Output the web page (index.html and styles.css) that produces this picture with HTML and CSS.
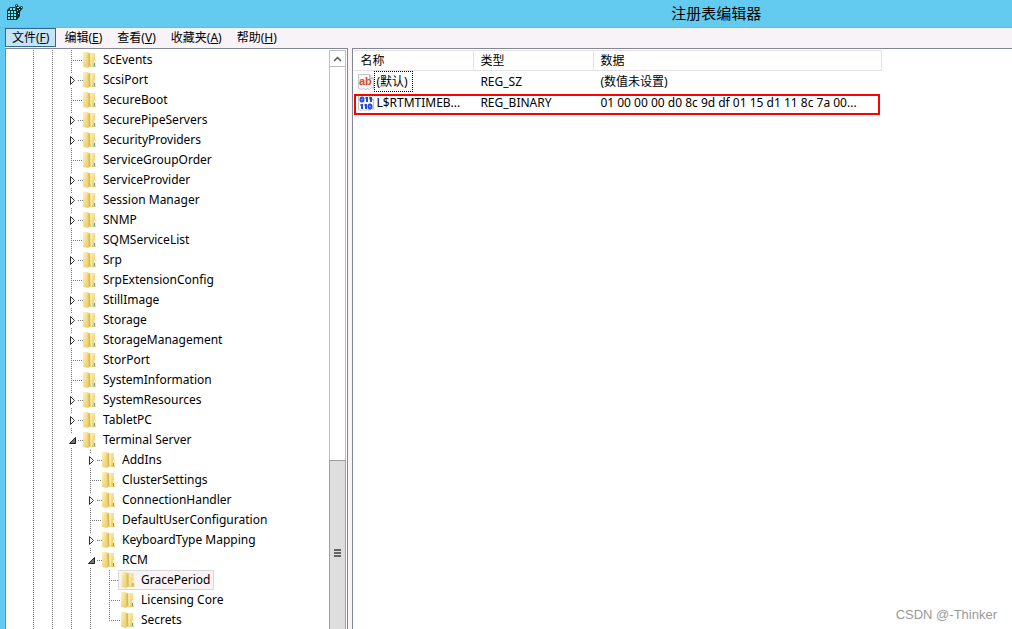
FILE: index.html
```html
<!DOCTYPE html>
<html lang="zh-CN">
<head>
    <meta charset="utf-8">
    <title>注册表编辑器</title>
    <link rel="stylesheet" href="styles.css">
</head>
<body>
    <!-- icons used by the tree and the value list -->
    <svg class="sprite" aria-hidden="true">
        <defs>
            <linearGradient id="gold" x1="0" x2="1" y1="0" y2="1">
                <stop offset="0" stop-color="#fdf3bd"/>
                <stop offset="1" stop-color="#e8c85c"/>
            </linearGradient>
            <linearGradient id="flap" x1="0" x2="1" y1="0" y2="0">
                <stop offset="0" stop-color="#f2dc86"/>
                <stop offset="1" stop-color="#d2b04c"/>
            </linearGradient>
        </defs>
        <symbol id="folder" viewBox="0 0 14 16">
            <path d="M5 1h7v6l1 1v7H5z" fill="url(#gold)"/>
            <path d="M0 0h5l1 1v14l-1 1-5-1z" fill="url(#gold)"/>
            <path d="M4 2l3-1v13l-3 2z" fill="url(#flap)"/>
            <path d="M8.500 2v12" stroke="#f9eaa8"/>
            <path d="M11 8h2v6h-2z" fill="#fff3c4"/>
            <path d="M11 11h1v3h-1z" fill="#3fa3e0"/>
        </symbol>
        <symbol id="closed" viewBox="0 0 7 9">
            <path d="M1.500.5v8l4-4z" fill="#fff" stroke="#333"/>
        </symbol>
        <symbol id="open" viewBox="0 0 7 9">
            <path d="M6.500 1.500v6h-6z" fill="#777" stroke="#222"/>
        </symbol>
        <symbol id="page" viewBox="0 0 16 16">
            <path d="M.5.5h11l4 4v10l-2-1-2 2-2-1-2 1-2-1-2 1-3-1z" fill="#f7f7f7" stroke="#c4c4c4"/>
            <path d="M11.500.5v4h4" fill="#ddd" stroke="#b5b5b5"/>
        </symbol>
    </svg>

    <header class="titlebar">
        <svg class="app-icon" viewBox="0 0 16 16" aria-hidden="true">
            <path d="M0 6l3-3h5l1 3h4v6l-3 4H0z" fill="#0b3238"/>
            <path d="M3 4h2v2H3zM6 4h2v2H6zM1 7h2v2H1zM4 7h2v2H4zM7 7h2v2H7zM1 10h2v2H1zM4 10h2v2H4zM7 10h2v2H7zM1 13h2v2H1zM4 13h2v2H4zM7 13h2v2H7z" fill="#62eeee"/>
            <path d="M8 1l2-1 2 3 3-1 1 2-4 5-3-3z" fill="#0b2a2e"/>
            <path d="M9 1h1v1H9zM10 3h2v1h-2zM14 3h1v1h-1zM12 5h1v1h-1zM10 6h1v1h-1zM11 9h1v1h-1z" fill="#6ff"/>
        </svg>
        <h1>注册表编辑器</h1>
    </header>

    <div class="window">
        <nav class="menubar">
            <button class="active">文件(<u>F</u>)</button>
            <button>编辑(<u>E</u>)</button>
            <button>查看(<u>V</u>)</button>
            <button>收藏夹(<u>A</u>)</button>
            <button>帮助(<u>H</u>)</button>
        </nav>

        <main class="panes">
            <section class="tree-pane">
                <!-- registry key tree -->
                <ul class="tree">
                    <li><div class="key"><i></i><svg><use href="#folder"/></svg><a href="#">ScEvents</a></div></li>
                    <li><div class="key"><button aria-label="Expand"><svg><use href="#closed"/></svg></button><svg><use href="#folder"/></svg><a href="#">ScsiPort</a></div></li>
                    <li><div class="key"><i></i><svg><use href="#folder"/></svg><a href="#">SecureBoot</a></div></li>
                    <li><div class="key"><button aria-label="Expand"><svg><use href="#closed"/></svg></button><svg><use href="#folder"/></svg><a href="#">SecurePipeServers</a></div></li>
                    <li><div class="key"><button aria-label="Expand"><svg><use href="#closed"/></svg></button><svg><use href="#folder"/></svg><a href="#">SecurityProviders</a></div></li>
                    <li><div class="key"><i></i><svg><use href="#folder"/></svg><a href="#">ServiceGroupOrder</a></div></li>
                    <li><div class="key"><button aria-label="Expand"><svg><use href="#closed"/></svg></button><svg><use href="#folder"/></svg><a href="#">ServiceProvider</a></div></li>
                    <li><div class="key"><button aria-label="Expand"><svg><use href="#closed"/></svg></button><svg><use href="#folder"/></svg><a href="#">Session Manager</a></div></li>
                    <li><div class="key"><button aria-label="Expand"><svg><use href="#closed"/></svg></button><svg><use href="#folder"/></svg><a href="#">SNMP</a></div></li>
                    <li><div class="key"><i></i><svg><use href="#folder"/></svg><a href="#">SQMServiceList</a></div></li>
                    <li><div class="key"><button aria-label="Expand"><svg><use href="#closed"/></svg></button><svg><use href="#folder"/></svg><a href="#">Srp</a></div></li>
                    <li><div class="key"><i></i><svg><use href="#folder"/></svg><a href="#">SrpExtensionConfig</a></div></li>
                    <li><div class="key"><button aria-label="Expand"><svg><use href="#closed"/></svg></button><svg><use href="#folder"/></svg><a href="#">StillImage</a></div></li>
                    <li><div class="key"><button aria-label="Expand"><svg><use href="#closed"/></svg></button><svg><use href="#folder"/></svg><a href="#">Storage</a></div></li>
                    <li><div class="key"><button aria-label="Expand"><svg><use href="#closed"/></svg></button><svg><use href="#folder"/></svg><a href="#">StorageManagement</a></div></li>
                    <li><div class="key"><i></i><svg><use href="#folder"/></svg><a href="#">StorPort</a></div></li>
                    <li><div class="key"><i></i><svg><use href="#folder"/></svg><a href="#">SystemInformation</a></div></li>
                    <li><div class="key"><button aria-label="Expand"><svg><use href="#closed"/></svg></button><svg><use href="#folder"/></svg><a href="#">SystemResources</a></div></li>
                    <li><div class="key"><button aria-label="Expand"><svg><use href="#closed"/></svg></button><svg><use href="#folder"/></svg><a href="#">TabletPC</a></div></li>
                    <li>
                        <div class="key"><button aria-label="Collapse"><svg><use href="#open"/></svg></button><svg><use href="#folder"/></svg><a href="#">Terminal Server</a></div>
                        <ul>
                            <li><div class="key"><button aria-label="Expand"><svg><use href="#closed"/></svg></button><svg><use href="#folder"/></svg><a href="#">AddIns</a></div></li>
                            <li><div class="key"><i></i><svg><use href="#folder"/></svg><a href="#">ClusterSettings</a></div></li>
                            <li><div class="key"><button aria-label="Expand"><svg><use href="#closed"/></svg></button><svg><use href="#folder"/></svg><a href="#">ConnectionHandler</a></div></li>
                            <li><div class="key"><i></i><svg><use href="#folder"/></svg><a href="#">DefaultUserConfiguration</a></div></li>
                            <li><div class="key"><button aria-label="Expand"><svg><use href="#closed"/></svg></button><svg><use href="#folder"/></svg><a href="#">KeyboardType Mapping</a></div></li>
                            <li>
                                <div class="key"><button aria-label="Collapse"><svg><use href="#open"/></svg></button><svg><use href="#folder"/></svg><a href="#">RCM</a></div>
                                <ul>
                                    <li><div class="key selected"><i></i><svg><use href="#folder"/></svg><a href="#">GracePeriod</a></div></li>
                                    <li><div class="key"><i></i><svg><use href="#folder"/></svg><a href="#">Licensing Core</a></div></li>
                                    <li class="last"><div class="key"><i></i><svg><use href="#folder"/></svg><a href="#">Secrets</a></div></li>
                                </ul>
                            </li>
                        </ul>
                    </li>
                </ul>

                <div class="scrollbar">
                    <button aria-label="Scroll up"><svg viewBox="0 0 9 6"><path d="M1 5l3.500-3.500L8 5" fill="none" stroke="#555" stroke-width="1.500"/></svg></button>
                    <div class="track"></div>
                    <div class="thumb"><span></span></div>
                </div>
            </section>

            <section class="value-pane">
                <!-- values of the selected key -->
                <table>
                    <colgroup><col class="col-name"><col class="col-type"><col class="col-data"></colgroup>
                    <thead>
                        <tr><th>名称</th><th>类型</th><th>数据</th></tr>
                    </thead>
                    <tbody>
                        <tr>
                            <td><div class="name"><svg viewBox="0 0 16 16"><use href="#page"/><text class="ab" x="1" y="11">ab</text></svg><span class="focused">(默认)</span></div></td>
                            <td>REG_SZ</td>
                            <td>(数值未设置)</td>
                        </tr>
                        <tr class="marked">
                            <td><div class="name"><svg viewBox="0 0 16 16"><use href="#page"/><g fill="none" stroke="#2a48d8" stroke-width="2"><ellipse cx="4" cy="4.500" rx="1.500" ry="2"/><path d="M9 2v5M7.500 3h1M13 2v5M11.500 3h1M4 9v5M2.500 10h1M8 9v5M6.500 10h1"/><ellipse cx="12" cy="11.500" rx="1.500" ry="2"/></g></svg><span>L$RTMTIMEB...</span></div></td>
                            <td>REG_BINARY</td>
                            <td>01 00 00 00 d0 8c 9d df 01 15 d1 11 8c 7a 00...</td>
                        </tr>
                    </tbody>
                </table>
            </section>
        </main>
    </div>

    <p class="watermark">CSDN @-Thinker</p>
</body>
</html>
```

FILE: styles.css
```css
* {
    box-sizing: border-box;
}

body {
    margin: 0;
    height: 100vh;
    display: flex;
    flex-direction: column;
    overflow: hidden;
    background: #63caf0;
    color: #000;
    font-family: "Noto Sans", "Noto Sans CJK SC", sans-serif;
    font-size: 12px;
    line-height: 20px;
}

button {
    margin: 0;
    padding: 0;
    border: none;
    background: none;
    font: inherit;
    color: inherit;
}

.sprite {
    position: absolute;
    width: 0;
    height: 0;
}

/* Title bar */
.titlebar {
    display: flex;
    flex: none;
    height: 28px;
    padding-left: 7px;
    border-bottom: 1px solid #7fb4d4;
}

.app-icon {
    width: 16px;
    height: 16px;
    margin-top: 4px;
}

.titlebar h1 {
    margin: 0 0 0 64.5%;
    font-size: 15px;
    font-weight: normal;
    line-height: 26px;
}

/* Menu bar */
.window {
    flex: 1;
    min-height: 0;
    display: flex;
    flex-direction: column;
    margin-left: 5px;
    background: #f7f3f7;
}

.menubar {
    display: flex;
    flex: none;
    gap: 1px;
    height: 20px;
}

.menubar button {
    height: 19px;
    padding: 0 6px;
    border: 1px solid transparent;
    line-height: 17px;
}

.menubar .active {
    background: #c6e4f7;
    border-color: #2f6897;
}

/* Panes */
.panes {
    flex: 1;
    min-height: 0;
    display: flex;
    gap: 4px;
}

.tree-pane {
    display: flex;
    flex: none;
    width: 34.1%;
    overflow: hidden;
    background: #fff;
    border: 1px solid #828796;
    border-bottom: none;
}

/* Tree, dotted guides are drawn as backgrounds */
.tree,
.tree ul {
    margin: 0;
    padding: 0;
    list-style: none;
}

.tree {
    flex: 1;
    margin-top: 1px;
    padding-left: 56px;
    background:
        repeating-linear-gradient(#777 0 1px, transparent 1px 2px) 27px 0 / 1px 100% no-repeat,
        repeating-linear-gradient(#777 0 1px, transparent 1px 2px) 46px 0 / 1px 100% no-repeat;
}

.tree ul {
    padding-left: 19px;
}

.tree li {
    background: repeating-linear-gradient(#777 0 1px, transparent 1px 2px) 9px 0 / 1px 100% no-repeat;
}

.tree .last {
    background-size: 1px 11px;
}

.key {
    display: flex;
    align-items: center;
    height: 20px;
}

.key i {
    width: 12px;
    height: 1px;
    margin-left: 9px;
    background: repeating-linear-gradient(90deg, #777 0 1px, transparent 1px 2px);
}

.key button {
    display: flex;
    align-items: center;
    width: 21px;
    height: 13px;
    padding-left: 7px;
    background:
        repeating-linear-gradient(90deg, #777 0 1px, transparent 1px 2px) right 6px / 5px 1px no-repeat,
        #fff;
}

.key button svg {
    width: 7px;
    height: 9px;
}

.key > svg {
    width: 14px;
    height: 16px;
}

.key a {
    padding: 0 3px;
    margin-left: 3px;
    color: inherit;
    text-decoration: none;
    white-space: nowrap;
}

/* the selection box starts behind the folder */
.selected i {
    width: 9px;
}

.selected > svg {
    width: 18px;
    height: 20px;
    padding: 1px 0 1px 2px;
    background: #f7f3f7;
    border: 1px solid #d9d9d9;
    border-right: none;
}

.selected a {
    height: 20px;
    margin: 0;
    padding-left: 5px;
    line-height: 18px;
    background: #f7f3f7;
    border: 1px solid #d9d9d9;
    border-left: none;
}

/* Scroll bar */
.scrollbar {
    display: flex;
    flex-direction: column;
    width: 17px;
    margin: 1px 1px 0 0;
    border: 1px solid #bdbdbd;
    border-bottom: none;
}

.scrollbar button {
    display: flex;
    flex: none;
    align-items: center;
    justify-content: center;
    height: 16px;
    border-bottom: 1px solid #bdbdbd;
}

.scrollbar button svg {
    width: 9px;
    height: 6px;
}

.track {
    height: 68%;
}

.thumb {
    flex: 1;
    display: flex;
    justify-content: center;
    margin: 0 -1px;
    padding-top: 88px;
    background: #dedede;
    border: 1px solid #a0a0a0;
    border-bottom: none;
}

.thumb span {
    width: 7px;
    height: 8px;
    background: repeating-linear-gradient(#666 0 2px, transparent 2px 3px);
}

/* Value list */
.value-pane {
    flex: 1;
    min-width: 0;
    background: #fff;
    border: 1px solid #828796;
    border-width: 1px 0 0 1px;
    padding: 1px;
}

table {
    table-layout: fixed;
    width: 528px;
    border-collapse: separate;
    border-spacing: 0;
}

.col-name,
.col-type {
    width: 120px;
}

th,
td {
    height: 21px;
    padding: 0 0 0 6px;
    font-weight: normal;
    line-height: 19px;
    text-align: left;
    white-space: nowrap;
}

th {
    border: 1px solid #e5e0e5;
    border-left: none;
}

.name {
    display: flex;
    align-items: center;
    margin-left: -2px;
}

.name svg {
    flex: none;
    width: 16px;
    height: 16px;
}

.name span {
    padding: 0 2px;
}

.name .focused {
    border: 1px dotted #000;
    height: 21px;
    padding: 0 4px 0 1px;
}

.ab {
    fill: #d9481f;
    font: bold 11px "Liberation Sans", sans-serif;
}

/* red box drawn over the marked value */
.marked {
    position: relative;
}

.marked td:last-child::after {
    content: "";
    position: absolute;
    top: 2px;
    right: 2px;
    bottom: -2px;
    left: 0;
    border: 2px solid #f00;
    pointer-events: none;
}

/* Watermark in the corner, over the window */
.watermark {
    position: absolute;
    right: 15px;
    bottom: 4px;
    margin: 0;
    color: #999;
    font: 13px/20px "Liberation Sans", sans-serif;
}
```
